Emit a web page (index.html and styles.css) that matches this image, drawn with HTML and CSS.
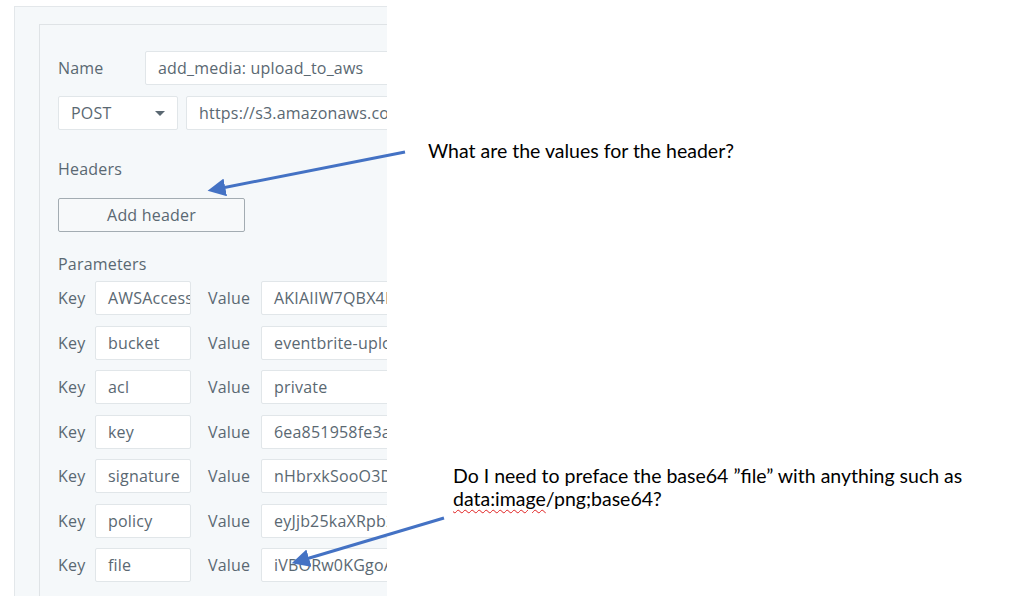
FILE: index.html
```html
<!DOCTYPE html>
<html>
<head>
<meta charset="utf-8">
<link rel="stylesheet" href="styles.css">
</head>
<body>
<div class="page">
  <div class="shot">
    <div class="panel">
      <div class="row name-row">
        <span class="label name-label">Name</span>
        <div class="input grow">add_media: upload_to_aws</div>
      </div>
      <div class="row url-row">
        <div class="input select">POST<span class="caret"></span></div>
        <div class="input grow">https://s3.amazonaws.com/eventbrite-uploader-incoming-prod</div>
      </div>
      <div class="section-label headers-label">Headers</div>
      <div class="btn">Add header</div>
      <div class="section-label params-label">Parameters</div>
      <div class="params">
        <div class="param"><span class="label key-label">Key</span><div class="input key">AWSAccessKeyId</div><span class="label val-label">Value</span><div class="input grow">AKIAIIW7QBX4BQ7ZLRHA</div></div>
        <div class="param"><span class="label key-label">Key</span><div class="input key">bucket</div><span class="label val-label">Value</span><div class="input grow">eventbrite-uploader-incoming-prod</div></div>
        <div class="param"><span class="label key-label">Key</span><div class="input key">acl</div><span class="label val-label">Value</span><div class="input grow">private</div></div>
        <div class="param"><span class="label key-label">Key</span><div class="input key">key</div><span class="label val-label">Value</span><div class="input grow">6ea851958fe3a1b2c4d5e6f7</div></div>
        <div class="param"><span class="label key-label">Key</span><div class="input key">signature</div><span class="label val-label">Value</span><div class="input grow">nHbrxkSooO3Dq8Ykz1</div></div>
        <div class="param"><span class="label key-label">Key</span><div class="input key">policy</div><span class="label val-label">Value</span><div class="input grow">eyJjb25kaXRpb25zIjpb</div></div>
        <div class="param"><span class="label key-label">Key</span><div class="input key">file</div><span class="label val-label">Value</span><div class="input grow">iVBORw0KGgoAAAANSUhEUg</div></div>
      </div>
    </div>
  </div>
  <div class="note note-header">What are the values for the header?</div>
  <div class="note note-file">Do I need to preface the base64 ”file” with anything such as<br><span class="squiggle">data:image</span>/png;base64?</div>
  <svg class="arrows" width="1024" height="606" viewBox="0 0 1024 606">
    <defs>
      <marker id="ah" markerWidth="6" markerHeight="6" refX="4.5" refY="3" orient="auto" markerUnits="strokeWidth">
        <path d="M0,0 L6,3 L0,6 Z" fill="#4472c4"/>
      </marker>
    </defs>
    <line x1="405" y1="152" x2="212" y2="190" stroke="#4472c4" stroke-width="3" marker-end="url(#ah)"/>
    <line x1="444" y1="518" x2="296" y2="562" stroke="#4472c4" stroke-width="3" marker-end="url(#ah)"/>
  </svg>
</div>
</body>
</html>
```
FILE: styles.css
```css
html, body {
  margin: 0;
  padding: 0;
  background: #ffffff;
}
.page {
  position: relative;
  width: 1024px;
  height: 606px;
  overflow: hidden;
  font-family: "Open Sans", "Noto Sans", sans-serif;
}
.shot {
  margin: 6px 0 0 14px;
  width: 373px;
  height: 590px;
  overflow: hidden;
  background: #f5f8fa;
  border-top: 1px solid #e3e7ea;
  border-left: 1px solid #e3e7ea;
  box-sizing: border-box;
}
.panel {
  margin: 17px 0 0 24px;
  width: 420px;
  height: 700px;
  box-sizing: border-box;
  border-top: 1px solid #dfe3e6;
  border-left: 1px solid #dfe3e6;
  background: #f5f8fa;
  padding: 25px 0 0 18px;
  color: #5a6872;
  font-size: 16px;
  letter-spacing: 0.2px;
}
.row {
  display: flex;
  align-items: center;
}
.name-row {
  padding-top: 1px;
}
.url-row {
  margin-top: 11px;
}
.label {
  flex: none;
  line-height: 20px;
}
.name-label {
  width: 87px;
}
.input {
  flex: none;
  box-sizing: border-box;
  height: 34px;
  line-height: 32px;
  background: #ffffff;
  border: 1px solid #e1e6e9;
  border-radius: 2px;
  padding: 0 12px;
  white-space: nowrap;
  overflow: hidden;
  color: #5a6872;
}
.grow {
  flex: 1 1 auto;
  min-width: 0;
}
.select {
  width: 120px;
  position: relative;
  margin-right: 8px;
}
.caret {
  position: absolute;
  right: 12px;
  top: 14px;
  width: 0;
  height: 0;
  border-left: 5px solid transparent;
  border-right: 5px solid transparent;
  border-top: 5px solid #5a6872;
}
.section-label {
  line-height: 22px;
}
.headers-label {
  margin-top: 28px;
}
.btn {
  margin-top: 18px;
  box-sizing: border-box;
  width: 187px;
  height: 34px;
  line-height: 32px;
  text-align: center;
  border: 1px solid #a3acb2;
  border-radius: 2px;
  background: #f7f9fa;
  color: #5a6872;
}
.params-label {
  margin-top: 21px;
}
.params {
  margin-top: 6px;
  display: flex;
  flex-direction: column;
  gap: 10.5px;
}
.param {
  display: flex;
  align-items: center;
}
.key-label {
  width: 37px;
}
.key {
  width: 96px;
}
.val-label {
  width: 53px;
  margin-left: 17px;
}
.note {
  position: absolute;
  font-family: "Lato", "Liberation Sans", sans-serif;
  font-size: 19.5px;
  color: #000000;
  line-height: 23px;
}
.note-header {
  left: 428px;
  top: 139px;
}
.note-file {
  left: 453px;
  top: 464px;
}
.squiggle {
  text-decoration: underline wavy #e02020;
  text-decoration-thickness: 1px;
  text-underline-offset: 3px;
}
.arrows {
  position: absolute;
  left: 0;
  top: 0;
  pointer-events: none;
}
```
